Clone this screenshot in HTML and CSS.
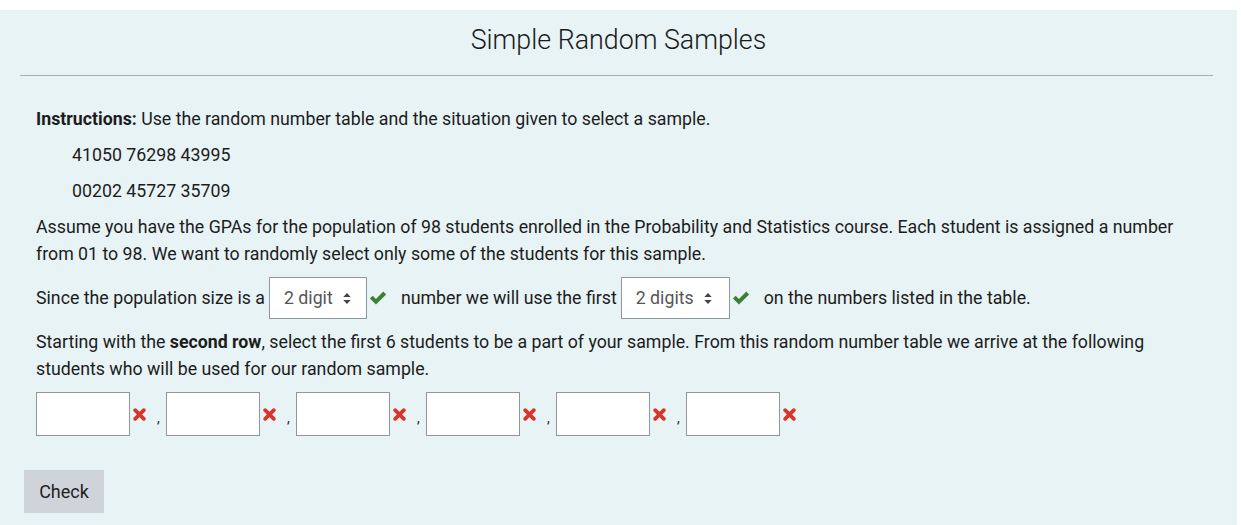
FILE: index.html
```html
<!DOCTYPE html>
<html>
<head>
<meta charset="utf-8">
<link rel="stylesheet" href="styles.css">
</head>
<body>
<div class="panel">
  <h1 class="title">Simple Random Samples</h1>
  <hr class="rule">
  <div class="content">
    <p class="line"><b>Instructions:</b> Use the random number table and the situation given to select a sample.</p>
    <p class="line indent">41050 76298 43995</p>
    <p class="line indent">00202 45727 35709</p>
    <p class="line">Assume you have the GPAs for the population of 98 students enrolled in the Probability and Statistics course. Each student is assigned a number from 01 to 98. We want to randomly select only some of the students for this sample.</p>
    <div class="selrow">
      <span>Since the population size is a</span>
      <span class="select s1">2 digit <svg class="sort" viewBox="0 0 10 14"><path d="M5 1 L9 5.5 H1 Z M5 13 L9 8.5 H1 Z" fill="#444"/></svg></span>
      <svg class="ok" viewBox="0 0 16 14"><path d="M0.8 7.4 L3.3 4.9 L6.2 7.8 L12.7 1.3 L15.2 3.8 L6.2 12.8 Z" fill="#3c8034"/></svg>
      <span class="gap">number we will use the first</span>
      <span class="select s2">2 digits <svg class="sort" viewBox="0 0 10 14"><path d="M5 1 L9 5.5 H1 Z M5 13 L9 8.5 H1 Z" fill="#444"/></svg></span>
      <svg class="ok" viewBox="0 0 16 14"><path d="M0.8 7.4 L3.3 4.9 L6.2 7.8 L12.7 1.3 L15.2 3.8 L6.2 12.8 Z" fill="#3c8034"/></svg>
      <span class="gap">on the numbers listed in the table.</span>
    </div>
    <p class="line">Starting with the <b>second row</b>, select the first 6 students to be a part of your sample. From this random number table we arrive at the following students who will be used for our random sample.</p>
    <div class="inrow">
      <span class="box"></span><svg class="bad" viewBox="0 0 12 12"><path d="M2 2 L10 10 M10 2 L2 10" stroke="#d8352a" stroke-width="3.4" stroke-linecap="round"/></svg><span class="comma">,</span>
      <span class="box"></span><svg class="bad" viewBox="0 0 12 12"><path d="M2 2 L10 10 M10 2 L2 10" stroke="#d8352a" stroke-width="3.4" stroke-linecap="round"/></svg><span class="comma">,</span>
      <span class="box"></span><svg class="bad" viewBox="0 0 12 12"><path d="M2 2 L10 10 M10 2 L2 10" stroke="#d8352a" stroke-width="3.4" stroke-linecap="round"/></svg><span class="comma">,</span>
      <span class="box"></span><svg class="bad" viewBox="0 0 12 12"><path d="M2 2 L10 10 M10 2 L2 10" stroke="#d8352a" stroke-width="3.4" stroke-linecap="round"/></svg><span class="comma">,</span>
      <span class="box"></span><svg class="bad" viewBox="0 0 12 12"><path d="M2 2 L10 10 M10 2 L2 10" stroke="#d8352a" stroke-width="3.4" stroke-linecap="round"/></svg><span class="comma">,</span>
      <span class="box"></span><svg class="bad" viewBox="0 0 12 12"><path d="M2 2 L10 10 M10 2 L2 10" stroke="#d8352a" stroke-width="3.4" stroke-linecap="round"/></svg>
    </div>
  </div>
  <div class="actions">
    <span class="check">Check</span>
  </div>
</div>
</body>
</html>
```
FILE: styles.css
```css
html, body {
  margin: 0;
  padding: 0;
  background: #ffffff;
}
body {
  font-family: Roboto, "Liberation Sans", sans-serif;
  font-size: 17.75px;
  color: #1c1c1c;
  padding-top: 10px;
}
.panel {
  background: #e7f3f5;
  width: 1237px;
  height: 515px;
  box-sizing: border-box;
  padding-top: 1px;
}
.title {
  margin: 13px 0 0;
  text-align: center;
  font-weight: 300;
  font-size: 26.8px;
  line-height: 32px;
  color: #1a1a1a;
}
.rule {
  margin: 19px 24px 0 20px;
  border: 0;
  border-top: 1px solid #a9adaf;
  height: 0;
}
.content {
  padding: 0 36px;
  margin-top: 30px;
}
.line {
  margin: 0 0 9px;
  line-height: 27px;
}
.line b {
  font-weight: 700;
}
.indent {
  padding-left: 36px;
}
.selrow {
  display: flex;
  align-items: center;
  height: 42px;
  margin: 1px 0 10px;
}
.select {
  display: flex;
  align-items: center;
  box-sizing: border-box;
  height: 42px;
  background: #ffffff;
  border: 1px solid #8e979c;
  color: #555;
  padding-left: 14px;
  margin-left: 4px;
}
.s1 { width: 98px; }
.s2 { width: 109px; margin-left: 4px; }
.sort {
  width: 10px;
  height: 13px;
  margin-left: 9px;
}
.ok {
  width: 18px;
  height: 16px;
  margin-left: 2px;
}
.gap {
  margin-left: 14px;
}
.inrow {
  display: flex;
  align-items: center;
  height: 44px;
  margin-top: 7px;
}
.box {
  box-sizing: border-box;
  width: 94px;
  height: 44px;
  background: #ffffff;
  border: 1px solid #8e979c;
}
.bad {
  width: 13px;
  height: 13px;
  margin-left: 3px;
}
.comma {
  width: 20px;
  padding-left: 11px;
  box-sizing: border-box;
  font-size: 14px;
  position: relative;
  top: 4px;
}
.actions {
  padding-left: 24px;
  margin-top: 34px;
}
.check {
  display: inline-flex;
  align-items: center;
  justify-content: center;
  width: 80px;
  height: 43px;
  background: #cfd4da;
  font-size: 18px;
  color: #1f1f1f;
}
```
